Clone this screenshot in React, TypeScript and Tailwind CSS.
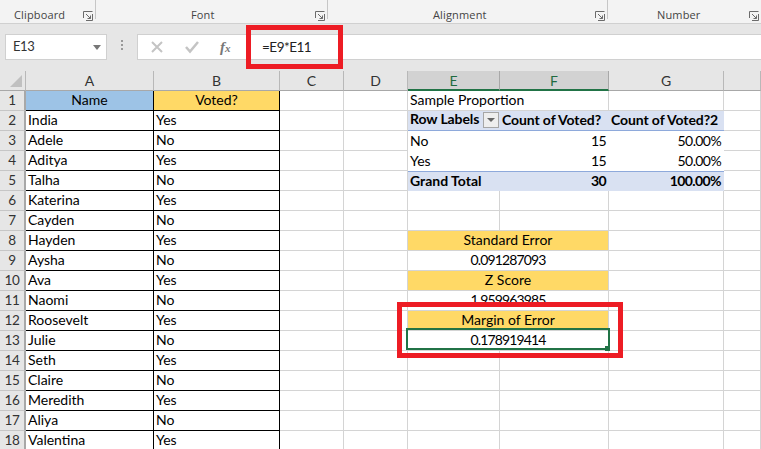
const cellFont = { fontFamily: 'Lato, "Liberation Sans", sans-serif' };

const names: [string, string][] = [
  ['India', 'Yes'], ['Adele', 'No'], ['Aditya', 'Yes'], ['Talha', 'No'], ['Katerina', 'Yes'], ['Cayden', 'No'],
  ['Hayden', 'Yes'], ['Aysha', 'No'], ['Ava', 'Yes'], ['Naomi', 'No'], ['Roosevelt', 'Yes'], ['Julie', 'No'],
  ['Seth', 'Yes'], ['Claire', 'No'], ['Meredith', 'Yes'], ['Aliya', 'No'], ['Valentina', 'Yes'],
];

function Launcher() {
  return (
    <svg width="10" height="10" viewBox="0 0 10 10" className="absolute right-[2px] top-[11px]" fill="none" stroke="#6b6b6b" strokeWidth="1">
      <path d="M0.5 7V0.5H9.5" />
      <path d="M9.5 3V9.5H3" />
      <path d="M3 3L7.5 7.5M7.5 4.5V7.5H4.5" />
    </svg>
  );
}

function RibbonGroup({ label, width, labelLeft }: { label: string; width: string; labelLeft: string }) {
  return (
    <div className={`relative h-[19px] shrink-0 border-r border-[#c6c6c6] ${width}`}>
      <span className={`absolute top-[7px] text-[11px] leading-[16px] tracking-[0.15px] text-[#444] ${labelLeft}`} style={{ fontFamily: '"Open Sans", sans-serif' }}>
        {label}
      </span>
      <Launcher />
    </div>
  );
}

function FormulaBar() {
  return (
    <div className="flex h-[47px] items-start bg-[#e6e6e6] pl-[5px] pt-[10px]">
      <div className="flex h-[26px] w-[102px] items-center justify-between border border-[#d0d0d0] bg-white pl-[7px] pr-[5px] text-[13px] tracking-[-0.4px] text-[#333]" style={cellFont}>
        E13
        <span className="h-0 w-0 border-x-[4px] border-t-[5px] border-x-transparent border-t-[#777]" />
      </div>
      <div className="flex w-[30px] flex-col items-center gap-[2px] pt-[6px]">
        <span className="h-[2px] w-[2px] bg-[#999]" />
        <span className="h-[2px] w-[2px] bg-[#999]" />
        <span className="h-[2px] w-[2px] bg-[#999]" />
      </div>
      <div className="flex h-[26px] flex-1 items-center border-y border-l border-[#d0d0d0] bg-white">
        <svg width="14" height="14" viewBox="0 0 14 14" className="ml-[12px]" stroke="#c4c4c4" strokeWidth="2" fill="none">
          <path d="M2 2L12 12M12 2L2 12" />
        </svg>
        <svg width="16" height="14" viewBox="0 0 16 14" className="ml-[20px]" stroke="#c4c4c4" strokeWidth="2.5" fill="none">
          <path d="M2 7L6 11.5L14 2" />
        </svg>
        <span className="ml-[20px] w-[16px] text-[15px] font-bold italic text-[#777]" style={{ fontFamily: '"Liberation Serif", serif' }}>
          f<span className="text-[11px]">x</span>
        </span>
        <span className="ml-[26px] text-[13.5px] tracking-[-0.5px] text-[#222]" style={cellFont}>=E9*E11</span>
      </div>
    </div>
  );
}

function Head({ label, active }: { label: string; active?: boolean }) {
  return (
    <div
      className={`flex items-center justify-center border-r text-[14px] ${active ? 'border-b-2 border-r-[#a8a8a8] border-b-[#217346] bg-[#d2d2d2] text-[#1f6b40]' : 'border-b border-r-[#b8b8b8] border-b-[#a8a8a8] bg-[#e6e6e6] text-[#333]'}`}
    >
      {label}
    </div>
  );
}

function RowHead({ n }: { n: number }) {
  return <div className="flex items-center justify-center border-r-2 border-b border-r-[#a8a8a8] border-b-[#c6c6c6] bg-[#e6e6e6] text-[13.5px] tracking-[-0.4px] text-[#333]">{n}</div>;
}

function Cell({ children, className = '' }: { children?: React.ReactNode; className?: string }) {
  return <div className={`flex items-center whitespace-nowrap px-[2px] pb-[2px] text-[14px] text-black ${className}`}>{children}</div>;
}

const grid = 'border-r border-b border-[#d4d4d4]';
const ink = 'border-r border-b border-black';
const pivotHead = 'border-b border-[#8ea9db] bg-[#d9e1f2] font-bold tracking-[-0.1px]';
const pivotTotal = 'border-t border-[#8ea9db] bg-[#d9e1f2] pb-[3px] font-bold';
const yellow = 'col-span-2 justify-center border-b border-r border-[#d4d4d4] bg-[#ffd966]';
const merged = 'col-span-2 justify-center border-b border-r border-[#d4d4d4] text-[13.5px] tracking-[-0.85px]';
const digits = 'justify-end pr-[3px] text-[13.5px] tracking-[-0.6px]';

function RightSide({ row }: { row: number }) {
  switch (row) {
    case 1:
      return (
        <>
          <Cell className={`${grid} col-span-2`}>Sample Proportion</Cell>
          <Cell className={grid} />
        </>
      );
    case 2:
      return (
        <>
          <Cell className={`${pivotHead} justify-between pb-0 pr-[1px]`}>
            <span className="pb-[2px]">Row Labels</span>
            <span className="flex h-[16px] w-[16px] items-center justify-center border border-[#a6a6a6] bg-[#eeeeee]">
              <span className="h-0 w-0 border-x-[4px] border-t-[4px] border-x-transparent border-t-[#666]" />
            </span>
          </Cell>
          <Cell className={pivotHead}>Count of Voted?</Cell>
          <Cell className={pivotHead}>Count of Voted?2</Cell>
        </>
      );
    case 3:
      return (
        <>
          <Cell>No</Cell>
          <Cell className={digits}>15</Cell>
          <Cell className={digits}>50.00%</Cell>
        </>
      );
    case 4:
      return (
        <>
          <Cell>Yes</Cell>
          <Cell className={digits}>15</Cell>
          <Cell className={digits}>50.00%</Cell>
        </>
      );
    case 5:
      return (
        <>
          <Cell className={pivotTotal}>Grand Total</Cell>
          <Cell className={`${digits} ${pivotTotal}`}>30</Cell>
          <Cell className={`${digits} ${pivotTotal}`}>100.00%</Cell>
        </>
      );
    case 8:
      return <><Cell className={yellow}>Standard Error</Cell><Cell className={grid} /></>;
    case 9:
      return <><Cell className={merged}>0.091287093</Cell><Cell className={grid} /></>;
    case 10:
      return <><Cell className={yellow}>Z Score</Cell><Cell className={grid} /></>;
    case 11:
      return <><Cell className={merged}>1.959963985</Cell><Cell className={grid} /></>;
    case 12:
      return <><Cell className={yellow}>Margin of Error</Cell><Cell className={grid} /></>;
    case 13:
      return <><Cell className={merged}>0.178919414</Cell><Cell className={grid} /></>;
    default:
      return <><Cell className={grid} /><Cell className={grid} /><Cell className={grid} /></>;
  }
}

function Sheet() {
  const rows = Array.from({ length: 18 }, (_, i) => i + 1);
  return (
    <div className="grid grid-cols-[26px_128px_126px_64px_64px_92px_109px_115px_37px] auto-rows-[20px]" style={cellFont}>
      <div className="relative border-r border-b border-r-[#b8b8b8] border-b-[#a8a8a8] bg-[#e6e6e6]">
        <span className="absolute bottom-[3px] right-[3px] h-0 w-0 border-b-[12px] border-l-[12px] border-b-[#c0c0c0] border-l-transparent" />
      </div>
      <Head label="A" />
      <Head label="B" />
      <Head label="C" />
      <Head label="D" />
      <Head label="E" active />
      <Head label="F" active />
      <Head label="G" />
      <Head label="" />
      {rows.map((r) => {
        const person = names[r - 2];
        return (
          <div key={r} className="contents">
            <RowHead n={r} />
            {r === 1 ? (
              <>
                <Cell className={`${ink} justify-center bg-[#9dc3e6]`}>Name</Cell>
                <Cell className={`${ink} justify-center bg-[#ffd966]`}>Voted?</Cell>
              </>
            ) : (
              <>
                <Cell className={ink}>{person[0]}</Cell>
                <Cell className={ink}>{person[1]}</Cell>
              </>
            )}
            <Cell className={grid} />
            <Cell className={grid} />
            <RightSide row={r} />
            <Cell className={grid} />
          </div>
        );
      })}
    </div>
  );
}

export default function App() {
  return (
    <div className="relative h-[449px] w-[761px] overflow-hidden bg-white">
      <div className="flex h-[24px] border-b border-[#d0d0d0] bg-[#f3f3f3]">
        <RibbonGroup label="Clipboard" width="w-[96px]" labelLeft="left-[14px]" />
        <RibbonGroup label="Font" width="w-[232px]" labelLeft="left-[95px]" />
        <RibbonGroup label="Alignment" width="w-[280px]" labelLeft="left-[105px]" />
        <RibbonGroup label="Number" width="w-[153px] border-r-0" labelLeft="left-[49px]" />
      </div>
      <FormulaBar />
      <Sheet />
      <div className="pointer-events-none absolute left-[246px] top-[25px] h-[44px] w-[97px] border-[5px] border-[#ed1c24]" />
      <div className="pointer-events-none absolute left-[397px] top-[302px] h-[56px] w-[226px] border-[5px] border-[#ed1c24]" />
      <div className="pointer-events-none absolute left-[406px] top-[328px] h-[22px] w-[204px] border-2 border-[#217346]">
        <span className="absolute -bottom-[3px] -right-[2px] h-[5px] w-[5px] bg-[#217346]" />
      </div>
    </div>
  );
}
